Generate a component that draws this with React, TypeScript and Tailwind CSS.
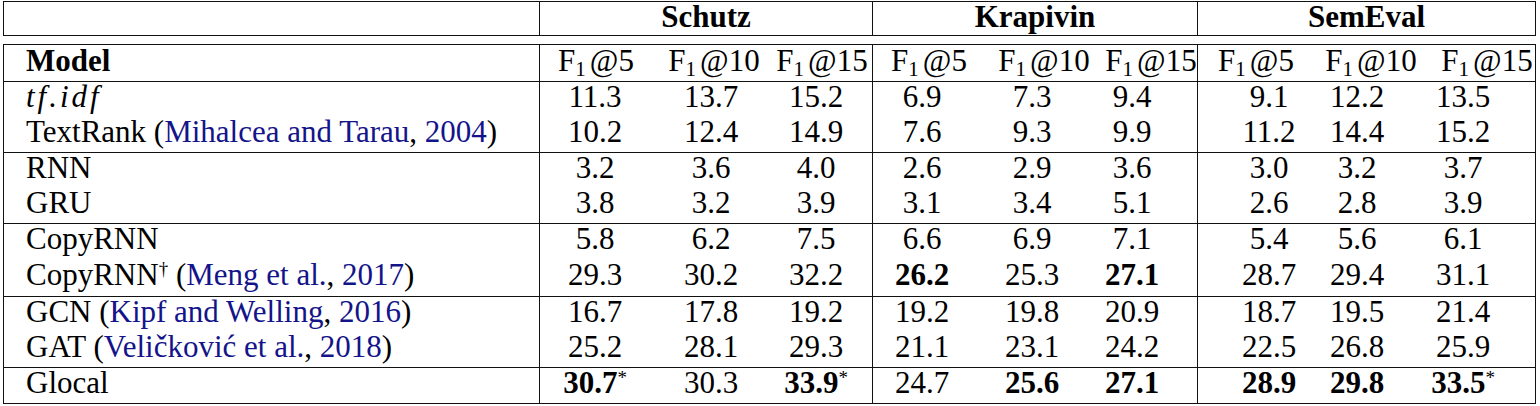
import type { ReactNode } from 'react';

const cite = 'text-[#14148a]';

type Row = { name: ReactNode; vals: string[] };

// '!' = bold, trailing '*' = superscript star
const groups: Row[][] = [
    [
        { name: <span className="italic tracking-[3px]">tf.idf</span>, vals: ['11.3', '13.7', '15.2', '6.9', '7.3', '9.4', '9.1', '12.2', '13.5'] },
        {
            name: <>TextRank (<span className={cite}>Mihalcea and Tarau</span>, <span className={cite}>2004</span>)</>,
            vals: ['10.2', '12.4', '14.9', '7.6', '9.3', '9.9', '11.2', '14.4', '15.2'],
        },
    ],
    [
        { name: 'RNN', vals: ['3.2', '3.6', '4.0', '2.6', '2.9', '3.6', '3.0', '3.2', '3.7'] },
        { name: 'GRU', vals: ['3.8', '3.2', '3.9', '3.1', '3.4', '5.1', '2.6', '2.8', '3.9'] },
    ],
    [
        { name: 'CopyRNN', vals: ['5.8', '6.2', '7.5', '6.6', '6.9', '7.1', '5.4', '5.6', '6.1'] },
        {
            name: <>CopyRNN<sup className="text-[19px] -top-[0.55em]">†</sup> (<span className={cite}>Meng et al.</span>, <span className={cite}>2017</span>)</>,
            vals: ['29.3', '30.2', '32.2', '!26.2', '25.3', '!27.1', '28.7', '29.4', '31.1'],
        },
    ],
    [
        {
            name: <>GCN (<span className={cite}>Kipf and Welling</span>, <span className={cite}>2016</span>)</>,
            vals: ['16.7', '17.8', '19.2', '19.2', '19.8', '20.9', '18.7', '19.5', '21.4'],
        },
        {
            name: <>GAT (<span className={cite}>Veličković et al.</span>, <span className={cite}>2018</span>)</>,
            vals: ['25.2', '28.1', '29.3', '21.1', '23.1', '24.2', '22.5', '26.8', '25.9'],
        },
    ],
    [
        { name: 'Glocal', vals: ['!30.7*', '30.3', '!33.9*', '24.7', '!25.6', '!27.1', '!28.9', '!29.8', '!33.5*'] },
    ],
];

const rowHeights = ['h-[35px]', 'h-[35px]', 'h-[36px]', 'h-[35px]', 'h-[35px]'];

// header labels and numbers don't share the same centres in the original
const headCols = [
    'grid grid-cols-[112px_124px_92px]',
    'grid grid-cols-[112px_118px_96px]',
    'grid grid-cols-[116px_114px_118px]',
];
const valCols = [
    'grid grid-cols-[110px_122px_88px]',
    'grid grid-cols-[98px_122px_78px]',
    'grid grid-cols-[142px_34px_178px]',
];

const Value = ({ v }: { v: string }) => {
    const bold = v.startsWith('!');
    const star = v.endsWith('*');
    const text = v.replace('!', '').replace('*', '');
    return (
        <div className="flex justify-center whitespace-nowrap">
            <span>
                <span className={bold ? 'font-bold' : ''}>{text}</span>
                {star && <sup className="text-[19px] -top-[0.5em]">*</sup>}
            </span>
        </div>
    );
};

const F1 = ({ k }: { k: string }) => (
    <div className="flex justify-center whitespace-nowrap pt-[1px]">
        <span>
            F<sub className="text-[21px] mr-[4px]">1</sub>@{k}
        </span>
    </div>
);

const Groups = ({ cols, children }: { cols: string[]; children: (g: number) => ReactNode }) => (
    <>
        {[0, 1, 2].map((g) => (
            <div key={g} className={`border-l border-[#111] ${cols[g]}`}>
                {children(g)}
            </div>
        ))}
    </>
);

export default function App() {
    return (
        <div className="w-[1540px] h-[406px] overflow-hidden bg-white pt-px pl-[3px] text-black text-[31px] leading-[30px] [font-family:'Liberation_Serif',serif]">
            <div className="w-[1533px] h-[35px] border border-[#111] grid grid-cols-[535px_333px_325px_338px] font-bold">
                <div />
                {['Schutz', 'Krapivin', 'SemEval'].map((t) => (
                    <div key={t} className="border-l border-[#111] text-center">
                        {t}
                    </div>
                ))}
            </div>

            <div className="mt-[8px] w-[1533px] border border-[#111]">
                <div className="h-[37px] border-b border-[#111] grid grid-cols-[535px_333px_325px_338px]">
                    <div className="pl-[22px] font-bold pt-[1px]">Model</div>
                    <Groups cols={headCols}>
                        {() => ['5', '10', '15'].map((k) => <F1 key={k} k={k} />)}
                    </Groups>
                </div>

                {groups.map((rows, gi) => (
                    <div key={gi} className={gi < groups.length - 1 ? 'border-b border-[#111]' : ''}>
                        {rows.map((r, ri) => (
                            <div key={ri} className={`${rowHeights[gi]} grid grid-cols-[535px_333px_325px_338px]`}>
                                <div className="pl-[22px] whitespace-nowrap">{r.name}</div>
                                <Groups cols={valCols}>
                                    {(g) => r.vals.slice(g * 3, g * 3 + 3).map((v, i) => <Value key={i} v={v} />)}
                                </Groups>
                            </div>
                        ))}
                    </div>
                ))}
            </div>
        </div>
    );
}
